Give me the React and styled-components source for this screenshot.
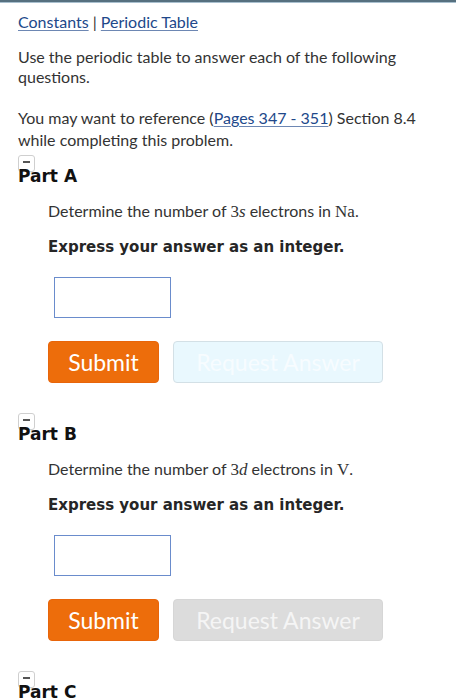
import styled, { createGlobalStyle } from "styled-components";

const GlobalStyle = createGlobalStyle`
  html, body {
    margin: 0;
    padding: 0;
    background: #ffffff;
  }
  body {
    font-family: Lato, "Open Sans", sans-serif;
    color: #333333;
  }
`;

const Page = styled.div`
  width: 456px;
  min-height: 700px;
  box-sizing: border-box;
  border-top: 2px solid #56707f;
  box-shadow: inset 0 1px 0 #a9c0cf;
  padding: 10px 18px 0 18px;
  overflow: hidden;
`;

const LinkRow = styled.div`
  font-size: 16px;
  line-height: 20px;
  color: #333;
`;

const A = styled.a`
  color: #21488a;
  text-decoration: underline;
  text-decoration-color: #6d87b3;
  text-underline-offset: 2px;
`;

const Para = styled.p`
  margin: ${(p) => p.$mt || 15}px 0 0 0;
  font-size: 16px;
  line-height: ${(p) => p.$lh || 20}px;
`;

const Part = styled.section`
  margin-top: ${(p) => p.$mt}px;
`;

const Toggle = styled.div`
  width: 15px;
  height: 15px;
  border: 1px solid #cfcfcf;
  border-radius: 3px;
  box-sizing: content-box;
  display: flex;
  justify-content: center;
  background: #fff;

  &::before {
    content: "";
    width: 7px;
    height: 2px;
    margin-top: 5px;
    background: #555;
  }
`;

const PartTitle = styled.h2`
  margin: -6px 0 0 0;
  font-family: "DejaVu Sans", Lato, sans-serif;
  font-size: 17px;
  line-height: 20px;
  font-weight: 700;
  color: #111;
  position: relative;
`;

const PartBody = styled.div`
  padding-left: 30px;
`;

const Question = styled.p`
  margin: 15px 0 0 0;
  font-size: 16px;
  line-height: 20px;
`;

const MathVar = styled.span`
  font-family: "Liberation Serif", serif;
  font-size: 17px;
  font-style: ${(p) => (p.$italic ? "italic" : "normal")};
`;

const Instruction = styled.p`
  margin: 15px 0 0 0;
  font-family: "DejaVu Sans", Lato, sans-serif;
  font-size: 15px;
  line-height: 20px;
  font-weight: 700;
  color: #262626;
`;

const Answer = styled.input`
  display: block;
  margin: 20px 0 0 6px;
  width: 117px;
  height: 41px;
  box-sizing: border-box;
  border: 1px solid #6a8ccc;
  border-radius: 0;
  outline: none;
  padding: 0 6px;
  font-size: 16px;
`;

const Buttons = styled.div`
  display: flex;
  gap: 14px;
  margin-top: 23px;
`;

const Button = styled.button`
  height: 42px;
  box-sizing: border-box;
  border-radius: 4px;
  font-family: Lato, "Open Sans", sans-serif;
  font-size: 23px;
  padding: 0;
  cursor: pointer;
`;

const SubmitButton = styled(Button)`
  width: 111px;
  background: #ed6d0b;
  border: 1px solid #e8650a;
  color: #fff;
`;

const RequestButton = styled(Button)`
  width: 210px;
  background: ${(p) => (p.$tint ? "#e9f8fe" : "#dcdcdc")};
  border: 1px solid ${(p) => (p.$tint ? "#d3e0e6" : "#d6d6d6")};
  color: ${(p) => (p.$tint ? "#f7fcff" : "#f5f5f5")};
`;

const parts = [
  { name: "A", orbital: "3", sub: "s", element: "Na", tint: true, mt: 4 },
  { name: "B", orbital: "3", sub: "d", element: "V", tint: false, mt: 30 },
];

const PartSection = ({ part }) => (
  <Part $mt={part.mt}>
    <Toggle />
    <PartTitle>Part {part.name}</PartTitle>
    <PartBody>
      <Question>
        Determine the number of <MathVar>{part.orbital}</MathVar>
        <MathVar $italic>{part.sub}</MathVar> electrons in{" "}
        <MathVar>{part.element}</MathVar>.
      </Question>
      <Instruction>Express your answer as an integer.</Instruction>
      <Answer type="text" />
      <Buttons>
        <SubmitButton>Submit</SubmitButton>
        <RequestButton $tint={part.tint}>Request Answer</RequestButton>
      </Buttons>
    </PartBody>
  </Part>
);

export default function App() {
  return (
    <>
      <GlobalStyle />
      <Page>
        <LinkRow>
          <A href="#">Constants</A> | <A href="#">Periodic Table</A>
        </LinkRow>
        <Para>
          Use the periodic table to answer each of the following questions.
        </Para>
        <Para $mt={20} $lh={22}>
          You may want to reference (<A href="#">Pages 347 - 351</A>) Section
          8.4 while completing this problem.
        </Para>
        {parts.map((p) => (
          <PartSection key={p.name} part={p} />
        ))}
        <Part $mt={30}>
          <Toggle />
          <PartTitle>Part C</PartTitle>
        </Part>
      </Page>
    </>
  );
}
